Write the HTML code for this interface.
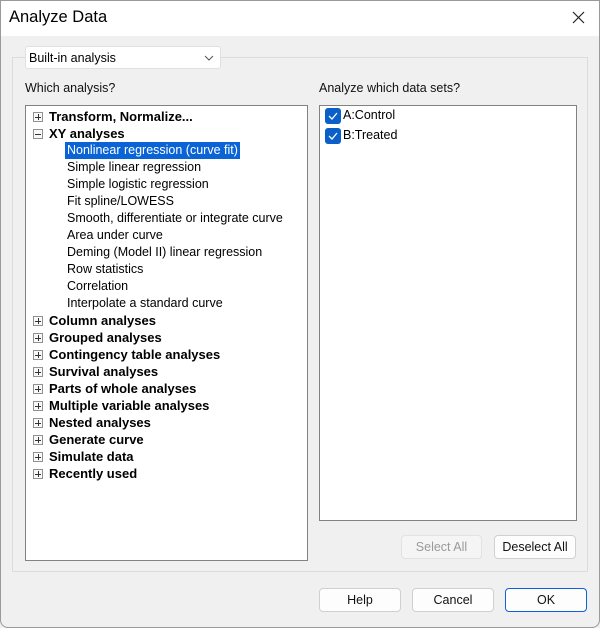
<!DOCTYPE html>
<html><head><style>
*{box-sizing:border-box;margin:0;padding:0}
body{width:600px;height:628px;background:#fff;font-family:"Liberation Sans",sans-serif;position:relative;overflow:hidden}
.win{position:absolute;left:0;top:0;width:600px;height:628px;background:#f0f0f0}
.frame{position:absolute;left:0;top:0;width:600px;height:628px;border:1px solid #9a9a9a;border-radius:0 0 8px 8px;pointer-events:none}
.title{position:absolute;left:0;top:0;width:600px;height:36px;background:#fff}
.title span{position:absolute;left:9px;top:8px;font-size:16.5px;color:#000}
.x{position:absolute;left:571px;top:10px}
.group{position:absolute;left:12px;top:57px;width:576px;height:515px;border:1px solid #dcdcdc}
.combo{position:absolute;left:25px;top:46px;width:196px;height:23px;background:#fff;border:1px solid #e0e0e0;border-radius:3px;font-size:12.5px;padding:4px 3px}
.lbl{position:absolute;font-size:12.5px;color:#111}
.list{position:absolute;background:#fff;border:1px solid #828282}
.row{position:absolute;left:7px;height:17px;font-size:12.5px;line-height:17px;white-space:nowrap}
.b{font-weight:bold;font-size:13px}
.pm{position:absolute;left:0;top:4px;width:10px;height:10px;border:1px solid #919191;background:#f8f8f8}
.pm:before{content:"";position:absolute;left:1px;top:3.5px;width:6px;height:1px;background:#333}
.pm.p:after{content:"";position:absolute;left:3.5px;top:1px;width:1px;height:6px;background:#333}
.t{position:absolute;left:16px}
.sub{position:absolute;left:34px}
.sel{background:#0a64d6;color:#fff;padding:0 2px;left:32px}
.cb{position:absolute;left:5px;width:16px;height:16px;background:#0a5fc8;border-radius:3px}
.btn{position:absolute;height:24px;border:1px solid #d0d0d0;border-radius:4px;background:#fdfdfd;font-size:12.5px;text-align:center;line-height:22px;color:#111}
</style></head><body>
<div class="win">
<div class="title"><span>Analyze Data</span>
<svg class="x" width="15" height="15"><path d="M2 2L13 13M13 2L2 13" stroke="#222" stroke-width="1.2"/></svg></div>
<div class="group"></div>
<div class="combo">Built-in analysis<svg style="position:absolute;right:6px;top:8px" width="10" height="6"><path d="M1 1L5 5L9 1" stroke="#555" fill="none"/></svg></div>
<div class="lbl" style="left:25px;top:81px">Which analysis?</div>
<div class="lbl" style="left:319px;top:81px">Analyze which data sets?</div>
<div class="list" style="left:25px;top:105px;width:283px;height:456px">
<div class="row" style="top:2px"><div class="pm p"></div><span class="t b">Transform, Normalize...</span></div>
<div class="row" style="top:19px"><div class="pm"></div><span class="t b">XY analyses</span></div>
<div class="row" style="top:36px"><span class="sub sel">Nonlinear regression (curve fit)</span></div>
<div class="row" style="top:53px"><span class="sub">Simple linear regression</span></div>
<div class="row" style="top:70px"><span class="sub">Simple logistic regression</span></div>
<div class="row" style="top:87px"><span class="sub">Fit spline/LOWESS</span></div>
<div class="row" style="top:104px"><span class="sub">Smooth, differentiate or integrate curve</span></div>
<div class="row" style="top:121px"><span class="sub">Area under curve</span></div>
<div class="row" style="top:138px"><span class="sub">Deming (Model II) linear regression</span></div>
<div class="row" style="top:155px"><span class="sub">Row statistics</span></div>
<div class="row" style="top:172px"><span class="sub">Correlation</span></div>
<div class="row" style="top:189px"><span class="sub">Interpolate a standard curve</span></div>
<div class="row" style="top:206px"><div class="pm p"></div><span class="t b">Column analyses</span></div>
<div class="row" style="top:223px"><div class="pm p"></div><span class="t b">Grouped analyses</span></div>
<div class="row" style="top:240px"><div class="pm p"></div><span class="t b">Contingency table analyses</span></div>
<div class="row" style="top:257px"><div class="pm p"></div><span class="t b">Survival analyses</span></div>
<div class="row" style="top:274px"><div class="pm p"></div><span class="t b">Parts of whole analyses</span></div>
<div class="row" style="top:291px"><div class="pm p"></div><span class="t b">Multiple variable analyses</span></div>
<div class="row" style="top:308px"><div class="pm p"></div><span class="t b">Nested analyses</span></div>
<div class="row" style="top:325px"><div class="pm p"></div><span class="t b">Generate curve</span></div>
<div class="row" style="top:342px"><div class="pm p"></div><span class="t b">Simulate data</span></div>
<div class="row" style="top:359px"><div class="pm p"></div><span class="t b">Recently used</span></div>
</div>
<div class="list" style="left:319px;top:105px;width:258px;height:416px">
<div class="cb" style="top:2px"><svg width="16" height="16"><path d="M4 8L7 11L12 5" stroke="#fff" stroke-width="1.3" fill="none"/></svg></div>
<div class="row" style="top:1px;left:23px">A:Control</div>
<div class="cb" style="top:22px"><svg width="16" height="16"><path d="M4 8L7 11L12 5" stroke="#fff" stroke-width="1.3" fill="none"/></svg></div>
<div class="row" style="top:21px;left:23px">B:Treated</div>
</div>
<div class="btn" style="left:401px;top:535px;width:81px;color:#9a9a9a;background:#f5f5f5;border-color:#e2e2e2">Select All</div>
<div class="btn" style="left:494px;top:535px;width:82px">Deselect All</div>
<div class="btn" style="left:319px;top:588px;width:82px">Help</div>
<div class="btn" style="left:412px;top:588px;width:82px">Cancel</div>
<div class="btn" style="left:505px;top:588px;width:82px;border-color:#0a64d6">OK</div>
</div>
<div class="frame"></div>
</body></html>
